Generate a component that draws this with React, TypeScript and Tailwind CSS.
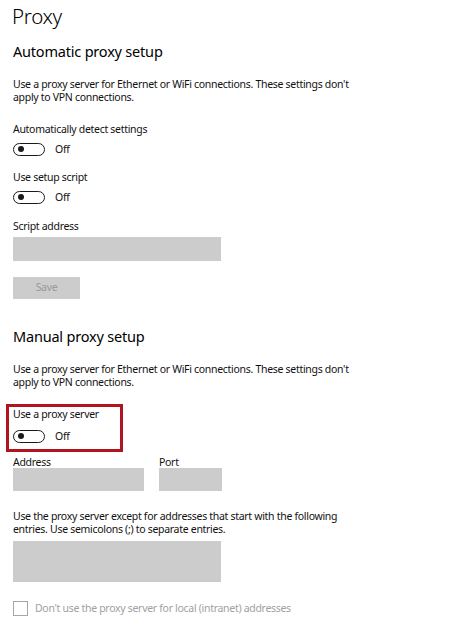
import React from 'react';

const body = 'text-[10.5px] tracking-[-0.3px]';

const Toggle: React.FC = () => (
  <div className="flex items-center h-[13px]">
    <div className="relative w-[32px] h-[13px] rounded-full border-[1.5px] border-[#1a1a1a]">
      <div className="absolute left-[4px] top-[2px] w-[6px] h-[6px] rounded-full bg-[#1a1a1a]" />
    </div>
    <span className={`ml-[10px] ${body} leading-[13px] text-[#111]`}>Off</span>
  </div>
);

export default function App() {
  return (
    <div
      className="w-[474px] h-[629px] bg-white overflow-hidden pl-[13px] text-[#111]"
      style={{ fontFamily: '"Noto Sans", "Open Sans", sans-serif' }}
    >
      <h1 className="pt-[5px] -ml-[1px] text-[20.5px] leading-[22px] tracking-[-0.3px] font-light text-black">
        Proxy
      </h1>

      {/* Automatic */}
      <h2 className="mt-[14px] text-[14.5px] leading-[20px] tracking-[-0.2px] font-normal text-black">
        Automatic proxy setup
      </h2>
      <p className={`mt-[17px] ${body} leading-[13px]`}>
        Use a proxy server for Ethernet or WiFi connections. These settings don't
        <br />
        apply to VPN connections.
      </p>

      <div className={`mt-[18px] ${body} leading-[14px]`}>Automatically detect settings</div>
      <div className="mt-[7px]">
        <Toggle />
      </div>

      <div className={`mt-[14px] ${body} leading-[14px]`}>Use setup script</div>
      <div className="mt-[7px]">
        <Toggle />
      </div>

      <div className={`mt-[15px] ${body} leading-[14px]`}>Script address</div>
      <div className="mt-[4px] w-[208px] h-[24px] bg-[#cccccc]" />

      <div
        className={`mt-[16px] w-[67px] h-[22px] bg-[#cccccc] flex items-center justify-center ${body} text-[#9a9a9a]`}
      >
        Save
      </div>

      {/* Manual */}
      <h2 className="mt-[27px] text-[14.5px] leading-[20px] tracking-[-0.2px] font-normal text-black">
        Manual proxy setup
      </h2>
      <p className={`mt-[17px] ${body} leading-[13px]`}>
        Use a proxy server for Ethernet or WiFi connections. These settings don't
        <br />
        apply to VPN connections.
      </p>

      <div className="mt-[15px] -ml-[7px] w-[117px] h-[48px] border-[3px] border-[#b0141e] pl-[4px]">
        <div className={`${body} leading-[14px]`}>Use a proxy server</div>
        <div className="mt-[9px]">
          <Toggle />
        </div>
      </div>

      <div className={`mt-[4px] flex gap-[15px] ${body} leading-[12px]`}>
        <div className="w-[131px]">
          <div>Address</div>
          <div className="h-[23px] bg-[#cccccc]" />
        </div>
        <div className="w-[63px]">
          <div>Port</div>
          <div className="h-[23px] bg-[#cccccc]" />
        </div>
      </div>

      <p className={`mt-[19px] ${body} leading-[13px]`}>
        Use the proxy server except for addresses that start with the following
        <br />
        entries. Use semicolons (;) to separate entries.
      </p>
      <div className="mt-[5px] w-[208px] h-[41px] bg-[#cccccc]" />

      <div className="mt-[19px] flex items-center">
        <div className="w-[15px] h-[15px] border-[1.5px] border-[#a6a6a6]" />
        <span className={`ml-[7px] ${body} leading-[15px] text-[#a0a0a0]`}>
          Don't use the proxy server for local (intranet) addresses
        </span>
      </div>
    </div>
  );
}
